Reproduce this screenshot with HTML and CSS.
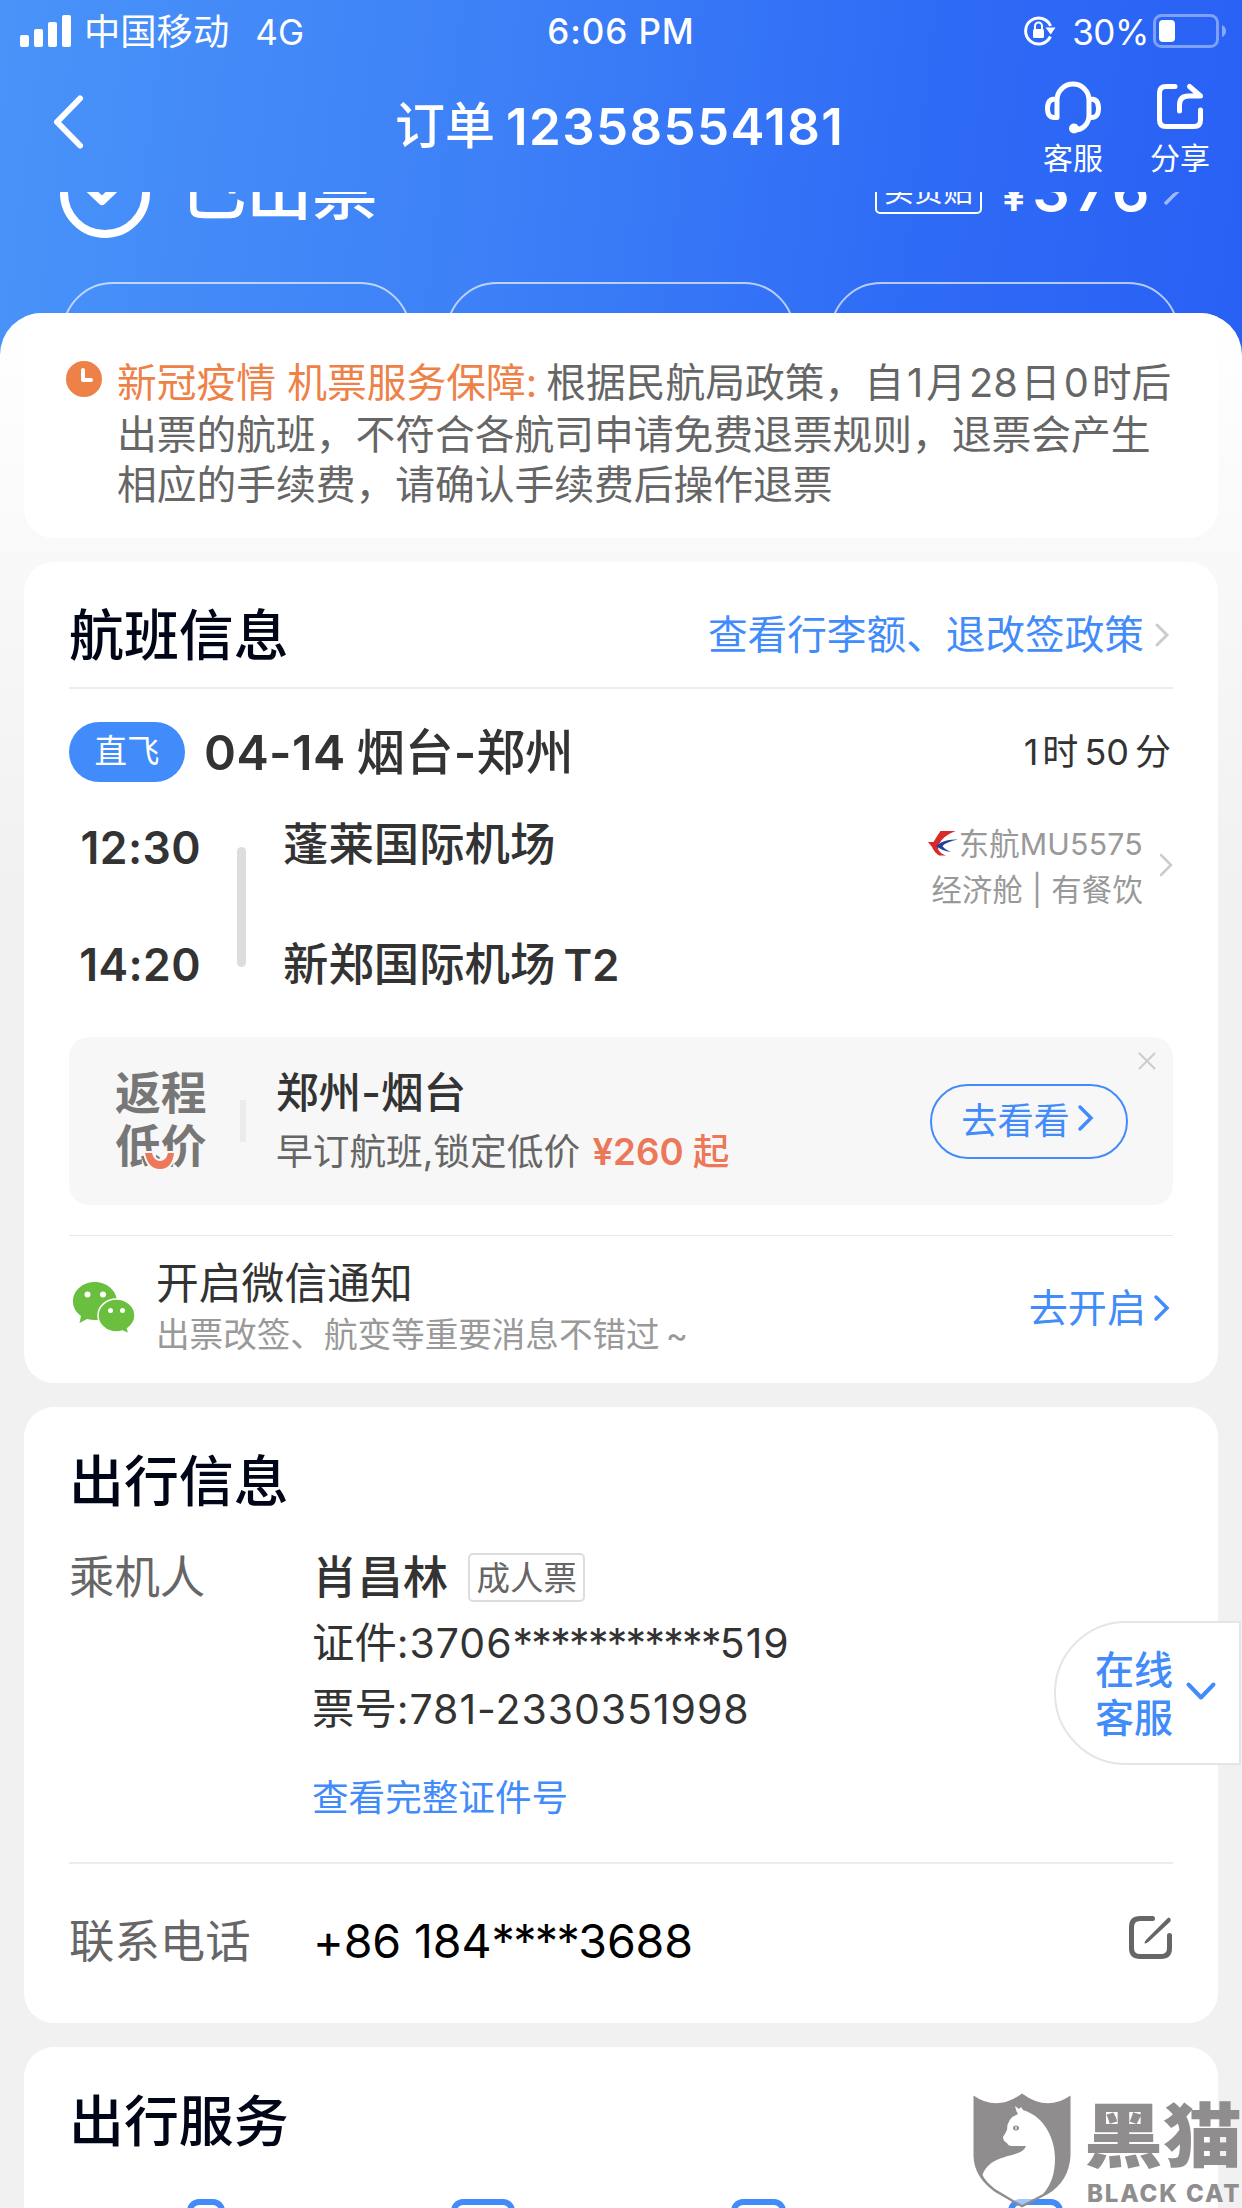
FILE: index.html
```html
<!DOCTYPE html>
<html lang="zh-CN">
<head>
<meta charset="utf-8">
<title>订单 12358554181</title>
<link rel="stylesheet" href="styles.css">
</head>
<body>
<div class="page">
  <div class="status">
    <div class="status-side">
      <svg class="signal" width="51" height="32" viewBox="0 0 51 32" fill="#fff"><rect y="20" width="9" height="12" rx="2"/><rect x="14" y="14" width="9" height="18" rx="2"/><rect x="28" y="7" width="9" height="25" rx="2"/><rect x="42" width="9" height="32" rx="2"/></svg>
      <span class="carrier">中国移动</span><span class="network">4G</span>
    </div>
    <div class="clock">6:06 PM</div>
    <div class="status-side status-right">
      <svg width="34" height="32" viewBox="0 0 34 32"><path d="M27.4 21.5A13 13 0 1 1 27.6 11" fill="none" stroke="#fff" stroke-width="3"/><path d="M22.5 12.5h10l-4.800 7z" fill="#fff"/><rect x="10" y="14" width="11" height="9" rx="1.500" fill="#fff"/><path d="M12 14v-3a3.500 3.500 0 0 1 7 0v3" fill="none" stroke="#fff" stroke-width="2"/></svg>
      <span class="percent">30%</span>
      <svg width="74" height="34" viewBox="0 0 74 34"><rect x="1.500" y="1.500" width="63" height="31" rx="7" fill="none" stroke="#fff" stroke-opacity=".4" stroke-width="3"/><rect x="6" y="6" width="16" height="22" rx="4" fill="#fff"/><path d="M69 11q4 2 4 6t-4 6z" fill="#fff" fill-opacity=".45"/></svg>
    </div>
  </div>
  <div class="nav">
    <svg class="back" width="30" height="54" viewBox="0 0 30 54"><path d="M27 3.500 4 27l23 23.500" fill="none" stroke="#fff" stroke-width="6" stroke-linecap="round" stroke-linejoin="round"/></svg>
    <h1 class="nav-title"><span class="nav-word">订单</span><span class="nav-no">12358554181</span></h1>
    <div class="nav-actions">
      <div class="action">
        <svg width="58" height="54" viewBox="0 0 58 54" fill="none" stroke="#fff" stroke-width="5" stroke-linecap="round" stroke-linejoin="round"><path d="M13 36V20a16 16 0 0 1 32 0v16M13 19h-2q-7.500 0-7.500 9.500T11 37.500h2zM45 19h2q7.500 0 7.500 9.500T47 37.500h-2zM45 35c0 9-6 15-15 15"/><circle cx="30" cy="48.500" r="2.500"/></svg>
        <span>客服</span>
      </div>
      <div class="action">
        <svg width="58" height="54" viewBox="0 0 58 54" fill="none" stroke="#fff" stroke-width="5" stroke-linecap="round" stroke-linejoin="round"><path d="M24 6.500H15q-6.500 0-6.500 6.500v27q0 6.500 6.500 6.500h28q6.500 0 6.500-6.500V30M28.500 31v-6q0-9 9-9h12L38.500 6.500"/></svg>
        <span>分享</span>
      </div>
    </div>
  </div>

  <div class="hero">
    <div class="hero-row">
      <svg width="90" height="90" viewBox="0 0 90 90" fill="none" stroke="#fff" stroke-width="8"><circle cx="45" cy="45" r="41"/><path d="M24 36 42 53 66 30" stroke-linejoin="round"/></svg>
      <span class="hero-state">已出票</span>
      <span class="hero-tag">买贵贴</span>
      <span class="hero-price"><small>¥</small>376</span>
      <svg width="16" height="30" viewBox="0 0 16 30"><path d="M2 3 14 14 2 26" fill="none" stroke="#fff" stroke-opacity=".55" stroke-width="3.500"/></svg>
    </div>
    <div class="hero-buttons"><i></i><i></i><i></i></div>
  </div>

  <main class="sheet">
    <section class="card notice">
      <svg class="notice-icon" width="36" height="36" viewBox="0 0 36 36"><circle cx="18" cy="18" r="18" fill="#ee8147"/><path d="M17 9v10h8" fill="none" stroke="#fff" stroke-width="4" stroke-linecap="round" stroke-linejoin="round"/></svg>
      <p class="notice-text">
        <span class="line"><b>新冠疫情 机票服务保障:</b> 根据民航局政策，自<i>1</i>月<i>28</i>日<i>0</i>时后</span>
        <span class="line">出票的航班，不符合各航司申请免费退票规则，退票会产生</span>
        <span class="line last">相应的手续费，请确认手续费后操作退票</span>
      </p>
    </section>

    <section class="card flight">
      <header class="card-head">
        <h2>航班信息</h2>
        <a class="link head-link">查看行李额、退改签政策<svg width="14" height="24" viewBox="0 0 14 24"><path d="M2 2l10 10L2 22" fill="none" stroke="#ccc" stroke-width="3" stroke-linecap="round"/></svg></a>
      </header>
      <div class="route">
        <span class="pill">直飞</span>
        <span class="route-name"><b>04-14</b> 烟台<b>-</b>郑州</span>
        <span class="duration"><i>1</i>时<i>50</i>分</span>
      </div>
      <div class="legs">
        <div class="times"><span>12:30</span><span>14:20</span></div>
        <div class="bar"></div>
        <div class="airports"><span>蓬莱国际机场</span><span>新郑国际机场 <em>T2</em></span></div>
        <div class="airline">
          <span><svg width="30" height="26" viewBox="0 0 30 26"><path d="M12.500 0H27.500Q15 5 11 13Q9 16 10.500 19Q13 23 18 24.500H11Q6 21 4 16L0 11H5.500Q9 5 12.500 0z" fill="#d62d2a"/><path d="M30 8.500Q20 8 13 11.500L8 15Q14 20 23 21Q16 18 14.500 15Q18 11 30 8.500z" fill="#23409b"/></svg>东航MU5575</span>
          <span class="cabin">经济舱 | 有餐饮</span>
        </div>
        <svg class="leg-arrow" width="14" height="24" viewBox="0 0 14 24"><path d="M2 2l10 10L2 22" fill="none" stroke="#ccc" stroke-width="2.500" stroke-linecap="round"/></svg>
      </div>
      <div class="promo">
        <div class="slogan"><span>返程</span><span>低价</span>
          <svg class="smile" width="30" height="17" viewBox="0 0 30 17"><path d="M0 0h7q2 8 8 8t8-8h6q-2 16-14 16T0 0z" fill="#ec7759" stroke="#f7f7f7" stroke-width="4" paint-order="stroke"/></svg>
        </div>
        <div class="promo-rule"></div>
        <div class="promo-text"><span class="promo-title">郑州-烟台</span><span class="promo-sub">早订航班,锁定低价 <b>¥260 <em>起</em></b></span></div>
        <a class="promo-btn">去看看<svg width="15" height="26" viewBox="0 0 15 26"><path d="M2 2l11 11L2 24" fill="none" stroke="#428bfa" stroke-width="3.500" stroke-linecap="round"/></svg></a>
        <svg class="close" width="18" height="18" viewBox="0 0 18 18"><path d="M1 1l16 16M17 1 1 17" stroke="#ccc" stroke-width="2"/></svg>
      </div>
      <div class="wechat">
        <svg width="64" height="52" viewBox="0 0 64 52"><path d="M22 0C9.500 0 0 8.500 0 19.500c0 6 3 11 8 14.500l-1.500 7 7.500-4q4 1 8 1c12.500 0 22-8.500 22-18.500S34.500 0 22 0z" fill="#6abf3e"/><path d="M43.500 17C33 17 25 24.500 25 33.500S33 50 43.500 50q3.500 0 6-1l6.500 3-1.500-5.500c4.500-3 7.500-8 7.500-13C62 24.500 54 17 43.500 17z" fill="#6abf3e" stroke="#fff" stroke-width="1.500"/><g fill="#fff"><circle cx="14.500" cy="12.500" r="3"/><circle cx="30" cy="12.500" r="3"/><circle cx="37.500" cy="28.500" r="2.500"/><circle cx="49.500" cy="28.500" r="2.500"/></g></svg>
        <div class="wechat-text"><span class="wechat-title">开启微信通知</span><span class="wechat-sub">出票改签、航变等重要消息不错过<i>~</i></span></div>
        <a class="link wechat-link">去开启<svg width="15" height="26" viewBox="0 0 15 26"><path d="M2 2l11 11L2 24" fill="none" stroke="#428bfa" stroke-width="3.500" stroke-linecap="round"/></svg></a>
      </div>
    </section>

    <section class="card trip">
      <h2>出行信息</h2>
      <div class="passenger">
        <span class="label">乘机人</span>
        <div class="details">
          <span class="name">肖昌林<span class="tag">成人票</span></span>
          <span class="id">证件<i>:3706<em>***********</em>519</i></span>
          <span class="ticket">票号<i>:781-2330351998</i></span>
          <a class="link full-id">查看完整证件号</a>
        </div>
      </div>
      <div class="contact">
        <span class="label">联系电话</span>
        <span class="phone">+86 184<em>****</em>3688</span>
        <svg width="43" height="43" viewBox="0 0 43 43" fill="none" stroke="#666" stroke-width="5" stroke-linecap="round"><path d="M23.500 2.500H11Q2.500 2.500 2.500 11v21q0 8.500 8.500 8.500h21q8.500 0 8.500-8.500V19.500"/><path d="M39.300 1.500a2.600 2.600 0 0 1 1.800 4.300L20.500 25q-3 2.800-4.800 2.400-.6-1.400 2.100-4.400z" fill="#666" stroke="none"/></svg>
      </div>
    </section>

    <section class="card services">
      <h2>出行服务</h2>
      <div class="service-icons"><i class="s1"></i><i class="s2"></i><i class="s3"></i><i class="s4"></i></div>
    </section>
  </main>

  <div class="float">
    <span class="float-text">在线<br>客服</span>
    <svg width="30" height="19" viewBox="0 0 30 19"><path d="M2.500 2.500 15 15.500 27.500 2.500" fill="none" stroke="#428bfa" stroke-width="4" stroke-linecap="round" stroke-linejoin="round"/></svg>
  </div>

  <div class="watermark">
    <svg width="98" height="115" viewBox="0 0 98 115"><path d="M42 13l4 3 2-2 2 3C73 24 82 48 82 66c0 16-4 27-12 36l-21 11-27-17Q12 88 9.500 82C16 63 40 64 49 58q3-2 4-5H39q-4 0-5-3-4-2-4-6 2-3 4-7 0-12 11-16z" fill="#fff" fill-opacity=".5"/><path fill-rule="evenodd" d="M.5 2.500Q24 19 49 .5 74 19 97.500 2.500V63Q96 88 75 101L49 114.500 22 99Q1 84 .5 63zM42 13q1 5 3 8-11 4-11 16-2 4-4 7 0 4 4 6 1 3 5 3H53q-1 3-4 5C40 64 16 63 9.500 82Q12 88 22 96l27 16 21-11c8-9 12-20 12-36C82 48 73 24 50 17l-2-3-2 2z" fill="#8f8d8e"/><ellipse cx="43" cy="35" rx="3" ry="2.500" fill="#8f8d8e"/><path d="M43 32.500q1.500 2.500 0 5-1.500-2.500 0-5z" fill="#fff"/></svg>
    <div class="watermark-text"><span class="wm-cn">黑猫</span><span class="wm-en">BLACK CAT</span></div>
  </div>
</div>
</body>
</html>
```
FILE: styles.css
```css
* { box-sizing: border-box; }
body { margin: 0; font-family: Inter, "Noto Sans CJK SC", sans-serif; color: #333; }
h1, h2, p { margin: 0; font-weight: 500; }
i, em { font-style: normal; }
svg { display: block; flex: none; overflow: visible; }
.page {
  position: relative; width: 1242px; height: 2208px; overflow: hidden;
  background: linear-gradient(97deg, #4993f9 0%, #3d80f7 40%, #2f6cf6 72%, #2860f4 100%) 0 0 / 100% 380px no-repeat;
  white-space: nowrap;
}

/* status bar */
.status { display: grid; grid-template-columns: 1fr auto 1fr; height: 60px; padding: 0 15px; color: #fff; font-size: 35px; line-height: 60px; }
.status-side { display: flex; align-items: center; }
.signal { margin-left: 5px; }
.carrier { font-size: 36.300px; margin-left: 13px; padding-top: 2px; }
.network { margin-left: 26px; padding-top: 2px; letter-spacing: .3px; }
.clock { font-weight: 500; padding-top: 1px; letter-spacing: .9px; }
.status-right { justify-content: flex-end; }
.percent { margin: 0 4px 0 15px; padding-top: 1px; letter-spacing: -.4px; }

/* navigation */
.nav { display: flex; height: 132px; padding: 0 32px 0 53px; color: #fff; }
.back { margin-top: 35px; }
.nav-title { display: flex; margin-left: 312px; line-height: 132px; }
.nav-word { font-size: 50px; }
.nav-no { margin-left: 11px; padding-top: 1px; font-size: 51px; font-weight: 600; letter-spacing: 1.400px; }
.nav-actions { display: flex; margin-left: auto; margin-top: 20px; gap: 47px; }
.action { display: flex; flex-direction: column; align-items: center; width: 60px; font-size: 30px; line-height: 50px; }
.action span { margin-top: -1px; }

/* order state, scrolled under the navigation */
.hero { display: flow-root; height: 121px; overflow: hidden; }
.hero-row { display: flex; align-items: center; height: 90px; margin-top: -44px; padding: 0 63px 0 60px; color: #fff; }
.hero-state { margin-left: 31px; padding-bottom: 5px; font-size: 65.500px; font-weight: 500; line-height: 90px; }
.hero-tag { margin-left: auto; width: 107px; height: 44px; margin-bottom: 2px; border: 2px solid #fff; border-radius: 5px; text-align: center; font-size: 29.500px; line-height: 36px; }
.hero-price { width: 146px; margin: 0 15px 0 20px; font-size: 59px; font-weight: 600; letter-spacing: 4.500px; line-height: 90px; }
.hero-price small { font-size: 42px; margin-right: 2px; }
.hero-buttons { display: flex; gap: 35px; margin: 44px 0 0 62px; }
.hero-buttons i { width: 349px; height: 102px; border: 2px solid rgba(255,255,255,.65); border-radius: 51px; }

/* sheet and cards */
.sheet { display: flex; flex-direction: column; gap: 24px; height: 1895px; padding: 0 24px; overflow: hidden; border-radius: 42px 42px 0 0; background: linear-gradient(#fff 0, #f1f1f1 560px); }
.card { flex: none; border-radius: 30px; background: #fff; padding: 0 45px; }
h2 { padding-top: 1px; font-size: 54.900px; line-height: 60px; color: #000517; }
.link { color: #428bfa; }

.notice { display: flex; height: 225px; padding: 43px 0 0 42px; border-radius: 0 0 30px 30px; }
.notice-icon { margin-top: 5px; }
.notice-text { margin-left: 15px; padding-top: 1px; font-size: 39.750px; color: #666; font-weight: 400; }
.notice-text b { margin-right: -2px; font-weight: 400; color: #ee8147; }
.notice-text i { margin: 0 3px; }
.line { display: block; height: 52px; line-height: 52px; }
.line.last { line-height: 47px; }

.flight { height: 821px; }
.card-head { display: flex; justify-content: space-between; align-items: center; height: 127px; padding-top: 19px; border-bottom: 2px solid #ededed; }
.head-link { display: flex; align-items: center; gap: 11px; padding: 1px 4px 0 0; font-size: 39.650px; line-height: 50px; }
.route { display: flex; align-items: center; height: 60px; margin-top: 33px; }
.pill { width: 116px; height: 60px; border-radius: 30px; background: #428bfa; color: #fff; text-align: center; font-size: 32.500px; line-height: 60px; }
.route-name { margin-left: 19px; font-size: 48.500px; font-weight: 500; line-height: 59px; word-spacing: -2px; }
.route-name b { font-size: 48.500px; font-weight: 600; letter-spacing: .4px; }
.duration { margin-left: auto; padding-right: 2px; font-size: 36px; line-height: 61px; }
.duration i { margin-right: 4px; }
.duration i + i { margin: 0 6px; }
.legs { display: flex; align-items: flex-start; height: 218px; margin-top: 37px; }
.times, .airports, .airline { display: flex; flex-direction: column; }
.times { width: 132px; padding-top: 4px; gap: 67px; align-items: flex-end; font-size: 44.500px; font-weight: 600; line-height: 51px; letter-spacing: .4px; gap: 66px; }
.bar { width: 9px; height: 120px; margin: 28px 0 0 36px; border-radius: 5px; background: #ddd; }
.airports { margin-left: 37px; padding-top: 1px; gap: 70px; font-size: 45.400px; font-weight: 500; line-height: 50px; }
.airports em { margin-left: -4px; font-size: 43.500px; font-weight: 600; }
.airline { margin-left: auto; padding-top: 2px; align-items: flex-end; font-size: 30.300px; line-height: 46px; color: #999; }
.airline span { display: flex; align-items: center; white-space: pre; letter-spacing: .2px; }
.airline .cabin { letter-spacing: .3px; }
.airline svg { margin-right: 1px; }
.leg-arrow { margin: 34px 0 0 16px; }

.promo { position: relative; display: flex; height: 168px; border-radius: 20px; background: #f7f7f7; }
.slogan { position: relative; display: flex; flex-direction: column; width: 92px; margin: 30px 0 0 46px; font-size: 45.800px; font-weight: 700; line-height: 53px; color: #777; }
.smile { position: absolute; left: 30px; top: 86px; }
.promo-rule { width: 6px; height: 42px; margin: 63px 0 0 33px; background: #ececec; }
.promo-text { display: flex; flex-direction: column; margin: 26px 0 0 30px; line-height: 59px; }
.promo-title { font-size: 42.600px; font-weight: 500; }
.promo-sub { font-size: 36.700px; color: #666; }
.promo-sub b { margin-left: 2px; font-weight: 600; color: #ec7759; }
.promo-sub em { font-weight: 500; }
.promo-btn { display: flex; align-items: center; justify-content: center; gap: 8px; width: 198px; height: 75px; margin: 47px 45px 0 auto; padding: 0 4px 7px 0; border: 2px solid #428bfa; border-radius: 38px; color: #428bfa; font-size: 36.200px; }
.close { position: absolute; right: 17px; top: 15px; }
.wechat { display: flex; align-items: center; height: 148px; margin-top: 30px; padding-left: 4px; border-top: 1px solid #e8e8e8; }
.wechat > svg { margin-top: -4px; }
.wechat-text { display: flex; flex-direction: column; margin: -1px 0 0 19px; line-height: 51px; }
.wechat-title { font-size: 42.800px; }
.wechat-sub { font-size: 33.600px; color: #999; }
.wechat-sub i { margin-left: 6px; }
.wechat-link { display: flex; align-items: center; gap: 8px; margin: -4px 4px 0 auto; font-size: 39.100px; line-height: 50px; }

.trip { height: 616px; padding-top: 43px; }
.passenger { display: flex; height: 321px; margin-top: 32px; padding-top: 2px; border-bottom: 2px solid #ededed; line-height: 66px; }
.label { width: 243px; font-size: 45.400px; color: #666; }
.details { display: flex; flex-direction: column; font-size: 42.400px; }
.name { display: flex; align-items: center; height: 65px; font-size: 45.400px; font-weight: 500; }
.tag { width: 117px; height: 49px; margin-left: 20px; border: 2px solid #ddd; border-radius: 5px; text-align: center; font-size: 33.500px; font-weight: 400; line-height: 46px; color: #666; }
.id i, .ticket i { font-size: 41px; letter-spacing: .95px; }
.id em { letter-spacing: -1.700px; }
.full-id { margin-top: 31px; font-size: 36.600px; line-height: 50px; }
.contact { display: flex; align-items: center; height: 152px; }
.contact .label { margin-top: -4px; }
.phone { margin-left: 1px; padding-top: 1px; font-size: 46.500px; letter-spacing: -.1px; color: #000; }
.phone em { letter-spacing: -1.600px; }
.contact svg { margin: -6px 1px 0 auto; }

.services { height: 200px; padding-top: 43px; }
.service-icons { display: flex; margin-top: 48px; }
.service-icons i { height: 64px; border: 6px solid #428bfa; border-radius: 12px; background: #fff; }
.s1 { width: 38px; margin-left: 118px; }
.s2 { width: 64px; margin-left: 226px; }
.s3 { width: 55px; margin-left: 216px; }
.s4 { width: 55px; margin-left: 222px; }

/* overlays */
.float { position: absolute; left: 1054px; top: 1621px; display: flex; align-items: center; width: 187px; height: 144px; padding: 1px 0 0 39px; border: 2px solid #e5e5e5; border-radius: 72px 0 0 72px; background: #fff; color: #428bfa; }
.float-text { font-size: 39px; font-weight: 500; line-height: 48px; }
.float svg { margin: -4px 0 0 13px; }
.watermark { position: absolute; left: 973px; top: 2093px; display: flex; color: #8f8d8e; }
.watermark-text { display: flex; flex-direction: column; margin-left: 16px; }
.wm-cn { font-size: 76px; font-weight: 900; line-height: 86px; transform: scale(1.04, .93); }
.wm-en { margin-top: 1px; font-size: 24px; font-weight: 800; line-height: 28px; letter-spacing: 1.900px; }
```
